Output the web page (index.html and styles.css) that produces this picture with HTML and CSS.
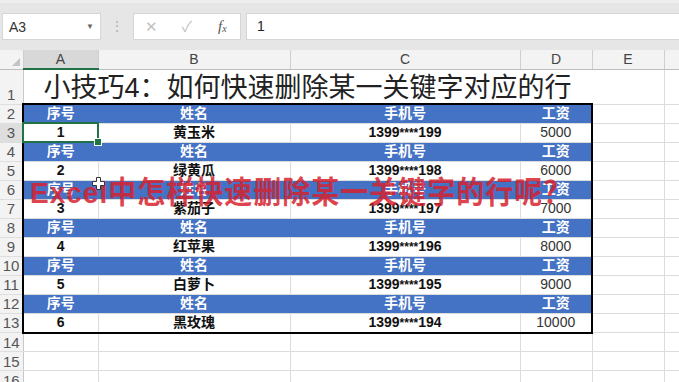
FILE: index.html
```html
<!DOCTYPE html>
<html lang="zh">
<head>
    <meta charset="UTF-8">
    <title>小技巧4</title>
    <link rel="stylesheet" href="styles.css">
</head>
<body>
<div class="bar">
    <div class="namebox"><span>A3</span><span class="drop">&#9660;</span></div>
    <div class="grip">&#8942;</div>
    <div class="fbtns">
        <span class="btn">&#10005;</span>
        <span class="btn">&#10003;</span>
        <span class="btn fx">f<sub>x</sub></span>
    </div>
    <div class="formula">1</div>
</div>
<div class="sheet">
    <table class="grid">
        <colgroup>
            <col class="c-rn"><col class="c-a"><col class="c-b"><col class="c-c"><col class="c-d"><col class="c-e"><col class="c-f">
        </colgroup>
        <tr class="colhead">
            <th class="corner"><i></i></th><th class="on">A</th><th>B</th><th>C</th><th>D</th><th>E</th><th></th>
        </tr>
        <tr class="r-title">
            <th class="rn">1</th><td colspan="4" class="title">小技巧4：如何快速删除某一关键字对应的行</td><td></td><td></td>
        </tr>
        <tr class="blue first">
            <th class="rn">2</th><td>序号</td><td>姓名</td><td>手机号</td><td>工资</td><td></td><td></td>
        </tr>
        <tr class="val">
            <th class="rn on">3</th><td class="sel">1</td><td>黄玉米</td><td>1399<span class="st">****</span>199</td><td class="sal">5000</td><td></td><td></td>
        </tr>
        <tr class="blue">
            <th class="rn">4</th><td>序号</td><td>姓名</td><td>手机号</td><td>工资</td><td></td><td></td>
        </tr>
        <tr class="val">
            <th class="rn">5</th><td>2</td><td>绿黄瓜</td><td>1399<span class="st">****</span>198</td><td class="sal">6000</td><td></td><td></td>
        </tr>
        <tr class="blue">
            <th class="rn">6</th><td>序号</td><td>姓名</td><td>手机号</td><td>工资</td><td></td><td></td>
        </tr>
        <tr class="val">
            <th class="rn">7</th><td>3</td><td>紫茄子</td><td>1399<span class="st">****</span>197</td><td class="sal">7000</td><td></td><td></td>
        </tr>
        <tr class="blue">
            <th class="rn">8</th><td>序号</td><td>姓名</td><td>手机号</td><td>工资</td><td></td><td></td>
        </tr>
        <tr class="val">
            <th class="rn">9</th><td>4</td><td>红苹果</td><td>1399<span class="st">****</span>196</td><td class="sal">8000</td><td></td><td></td>
        </tr>
        <tr class="blue">
            <th class="rn">10</th><td>序号</td><td>姓名</td><td>手机号</td><td>工资</td><td></td><td></td>
        </tr>
        <tr class="val">
            <th class="rn">11</th><td>5</td><td>白萝卜</td><td>1399<span class="st">****</span>195</td><td class="sal">9000</td><td></td><td></td>
        </tr>
        <tr class="blue">
            <th class="rn">12</th><td>序号</td><td>姓名</td><td>手机号</td><td>工资</td><td></td><td></td>
        </tr>
        <tr class="val last">
            <th class="rn">13</th><td>6</td><td>黑玫瑰</td><td>1399<span class="st">****</span>194</td><td class="sal">10000</td><td></td><td></td>
        </tr>
        <tr>
            <th class="rn">14</th><td></td><td></td><td></td><td></td><td></td><td></td>
        </tr>
        <tr>
            <th class="rn">15</th><td></td><td></td><td></td><td></td><td></td><td></td>
        </tr>
        <tr>
            <th class="rn">16</th><td></td><td></td><td></td><td></td><td></td><td></td>
        </tr>
    </table>
    <!-- 视频里叠加的字幕 -->
    <div class="caption">Excel中怎样快速删除某一关键字的行呢？</div>
    <svg class="cursor" width="13" height="13" viewBox="0 0 13 13">
        <path d="M4.5 0.5h4v4h4v4h-4v4h-4v-4h-4v-4h4z" fill="#fff" stroke="#333" stroke-width="1"/>
    </svg>
</div>
</body>
</html>
```

FILE: styles.css
```css
*{
    margin:0;
    padding:0;
    box-sizing:border-box;
}
body{
    width:679px;
    height:382px;
    overflow:hidden;
    background:#fff;
    font-family:"Liberation Sans","Noto Sans CJK SC",sans-serif;
}
.bar{
    height:50px;
    background:#e6e6e6;
    border-top:3px solid #eeeeee;
    padding-top:10px;
    display:flex;
    align-items:flex-start;
}
.namebox{
    margin-left:2px;
    width:99px;
    height:27px;
    background:#fff;
    border:1px solid #d6d6d6;
    display:flex;
    align-items:center;
    padding:0 6px;
    font-size:14px;
    color:#333;
}
.drop{
    margin-left:auto;
    font-size:8px;
    color:#666;
}
.grip{
    width:32px;
    text-align:center;
    line-height:27px;
    font-size:14px;
    color:#b4b4b4;
}
.fbtns{
    width:108px;
    height:27px;
    background:#fff;
    border:1px solid #d6d6d6;
    display:flex;
}
.btn{
    width:36px;
    text-align:center;
    line-height:25px;
    font-size:15px;
    color:#c2c2c2;
}
.fx{
    font-family:"Liberation Serif",serif;
    font-style:italic;
    color:#555;
    font-size:15px;
}
.fx sub{
    font-size:10px;
    vertical-align:-1px;
}
.formula{
    flex:1;
    margin-left:5px;
    height:27px;
    background:#fff;
    border:1px solid #d6d6d6;
    border-right:none;
    padding-left:10px;
    line-height:25px;
    font-size:14px;
    color:#222;
}
.sheet{
    position:relative;
}
.grid{
    border-collapse:collapse;
    table-layout:fixed;
    width:679px;
}
.c-rn{width:23px;}
.c-a{width:75px;}
.c-b{width:192px;}
.c-c{width:230px;}
.c-d{width:72px;}
.c-e{width:72px;}
.c-f{width:15px;}
.colhead th{
    height:19px;
    background:#f3f3f3;
    font-weight:normal;
    font-size:14px;
    color:#444;
    border-right:1px solid #cfcfcf;
    border-bottom:1px solid #bdbdbd;
}
.colhead th.on{
    background:#d8d8d8;
    border-bottom:2px solid #217346;
}
.corner{
    position:relative;
}
.corner i{
    position:absolute;
    right:3px;
    bottom:3px;
    border-left:8px solid transparent;
    border-bottom:8px solid #c4c4c4;
}
th.rn{
    height:19px;
    background:#f3f3f3;
    font-weight:normal;
    font-size:15px;
    color:#555;
    border-right:1px solid #c8c8c8;
    border-bottom:1px solid #dedede;
}
th.rn.on{
    background:#dedede;
}
.r-title th.rn{
    height:35px;
    vertical-align:bottom;
    padding-bottom:1px;
}
td{
    border:1px solid #dcdcdc;
    font-size:14px;
    text-align:center;
    white-space:nowrap;
    height:19px;
    line-height:17px;
}
.title{
    font-size:27px;
    line-height:30px;
    vertical-align:bottom;
    color:#222;
    border-left-color:#fff;
    border-right-color:#fff;
}
.blue td:nth-child(-n+5){
    background:#4472c4;
    color:#fff;
    font-weight:bold;
    border-left-color:#4472c4;
    border-right-color:#4472c4;
}
.val td{
    font-weight:bold;
    color:#111;
}
.val td.sal{
    font-weight:normal;
    color:#333;
}
.st{
    font-size:12px;
}
.blue td:nth-child(2),.val td:nth-child(2){
    border-left:2px solid #000;
}
.blue td:nth-child(5),.val td:nth-child(5){
    border-right:2px solid #000;
}
.first td:nth-child(-n+5){
    border-top:2px solid #000;
}
.last td:nth-child(-n+5){
    border-bottom:2px solid #000;
}
td.sel{
    position:relative;
    outline:2px solid #217346;
    outline-offset:-1px;
}
td.sel:after{
    content:"";
    position:absolute;
    right:-4px;
    bottom:-4px;
    width:6px;
    height:6px;
    background:#217346;
    border:1px solid #fff;
}
.caption{
    position:absolute;
    left:30px;
    top:118px;
    font-size:28px;
    font-weight:bold;
    letter-spacing:1px;
    color:rgba(214,34,46,0.86);
    white-space:nowrap;
    transform:scaleY(1.08);
    transform-origin:left top;
}
.cursor{
    position:absolute;
    left:92px;
    top:127px;
}
```
